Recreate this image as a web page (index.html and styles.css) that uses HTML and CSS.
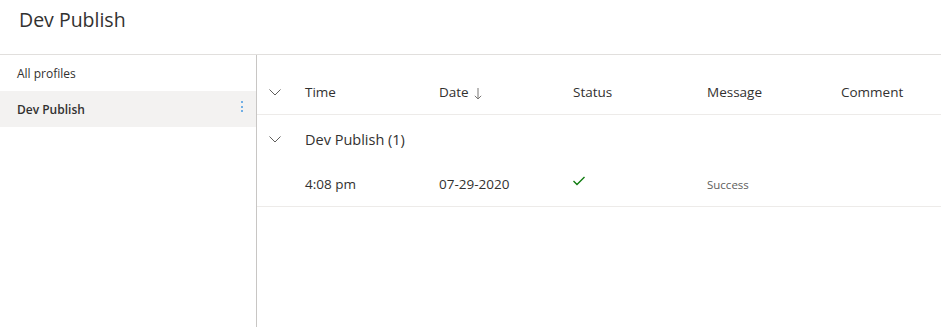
FILE: index.html
```html
<!DOCTYPE html>
<html lang="en">
<head>
    <meta charset="UTF-8">
    <meta name="viewport" content="width=device-width, initial-scale=1.0">
    <title>Dev Publish</title>
    <link rel="stylesheet" href="styles.css">
</head>
<body>
    <header class="page-header">
        <h1>Dev Publish</h1>
    </header>

    <div class="main">
        <nav class="sidebar">
            <div class="nav-item">All profiles</div>
            <div class="nav-item selected">
                <span>Dev Publish</span>
                <svg class="kebab" width="4" height="14" viewBox="0 0 4 14">
                    <rect x="1" y="1" width="2" height="2"/>
                    <rect x="1" y="6" width="2" height="2"/>
                    <rect x="1" y="10" width="2" height="2"/>
                </svg>
            </div>
        </nav>

        <section class="content">
            <div class="row header-row">
                <div class="cell chevron">
                    <svg width="12" height="7" viewBox="0 0 12 7"><path d="M0.5 0.5 L6 6 L11.5 0.5"/></svg>
                </div>
                <div class="cell">Time</div>
                <div class="cell sortable">Date
                    <svg class="sort" width="8" height="12" viewBox="0 0 8 12"><path d="M4 0 V11 M0.8 7.8 L4 11 L7.2 7.8"/></svg>
                </div>
                <div class="cell">Status</div>
                <div class="cell">Message</div>
                <div class="cell">Comment</div>
            </div>

            <div class="row group-row">
                <div class="cell chevron">
                    <svg width="12" height="7" viewBox="0 0 12 7"><path d="M0.5 0.5 L6 6 L11.5 0.5"/></svg>
                </div>
                <div class="cell group-title">Dev Publish (1)</div>
            </div>

            <div class="row data-row">
                <div class="cell"></div>
                <div class="cell">4:08 pm</div>
                <div class="cell">07-29-2020</div>
                <div class="cell">
                    <svg class="check" width="12" height="10" viewBox="0 0 12 10"><path d="M0.5 5 L4 8.5 L11.5 1"/></svg>
                </div>
                <div class="cell small">Success</div>
                <div class="cell"></div>
            </div>
        </section>
    </div>
</body>
</html>
```

FILE: styles.css
```css
* {
    box-sizing: border-box;
    margin: 0;
    padding: 0;
}

body {
    font-family: "Segoe UI", "Open Sans", sans-serif;
    color: #323130;
    background-color: #ffffff;
    width: 941px;
    height: 327px;
    overflow: hidden;
}

.page-header {
    height: 55px;
    border-bottom: 1px solid #e1dfdd;
    padding: 7px 0 0 19px;
}

.page-header h1 {
    font-size: 19.5px;
    font-weight: 400;
    line-height: 26px;
}

.main {
    display: flex;
    height: 272px;
}

.sidebar {
    width: 257px;
    border-right: 1px solid #c8c6c4;
    flex-shrink: 0;
}

.nav-item {
    height: 36px;
    display: flex;
    align-items: center;
    justify-content: space-between;
    padding: 0 12px 0 17px;
    font-size: 12px;
}

.nav-item.selected {
    background-color: #f3f2f1;
    font-weight: 600;
}

.kebab {
    fill: #71afe5;
    margin-top: -4px;
}

.content {
    flex: 1;
    padding-top: 15px;
}

.row {
    display: grid;
    grid-template-columns: 48px repeat(5, 134px);
    align-items: center;
}

.header-row {
    height: 45px;
    border-bottom: 1px solid #edebe9;
    font-size: 13.5px;
}

.group-row {
    height: 47px;
    padding-top: 2px;
}

.data-row {
    height: 45px;
    border-bottom: 1px solid #edebe9;
    font-size: 13.5px;
}

.cell {
    white-space: nowrap;
}

.chevron {
    padding-left: 12px;
    display: flex;
}

.chevron svg path {
    fill: none;
    stroke: #605e5c;
    stroke-width: 1;
}

.sortable {
    display: flex;
    align-items: center;
    gap: 5px;
}

.sort {
    margin-top: 3px;
}

.sort path {
    fill: none;
    stroke: #797775;
    stroke-width: 1;
}

.group-title {
    font-size: 14.5px;
    font-weight: 500;
    grid-column: 2 / span 3;
}

.check {
    display: block;
    margin-top: -6px;
}

.check path {
    fill: none;
    stroke: #107c10;
    stroke-width: 1.4;
}

.small {
    font-size: 11.5px;
    color: #605e5c;
}
```
